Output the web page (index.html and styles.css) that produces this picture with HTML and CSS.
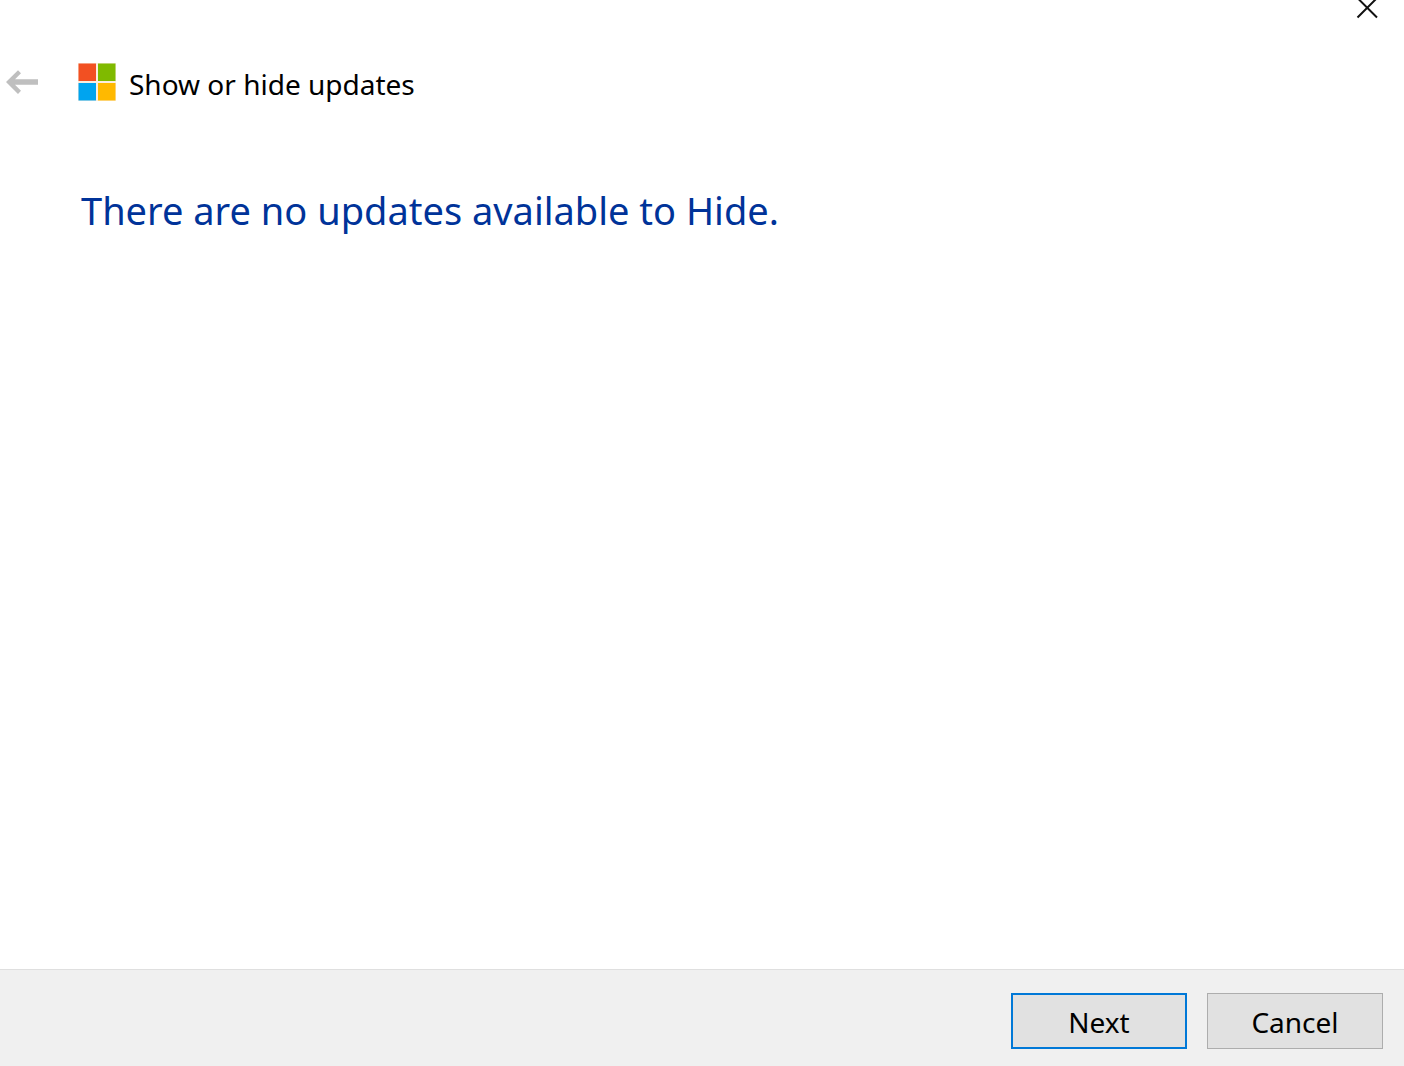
FILE: index.html
```html
<!DOCTYPE html>
<html lang="en">
<head>
<meta charset="utf-8">
<title>Show or hide updates</title>
<link rel="stylesheet" href="styles.css">
</head>
<body>
<div class="wizard">
  <div class="titlebar">
    <button class="icon-button" type="button" aria-label="Close">
      <svg class="close-icon" width="22" height="20" viewBox="0 0 22 20"><path d="M1.500 -2L21 17.500M21 -2L1.500 17.500" fill="none" stroke="#111" stroke-width="2"/></svg>
    </button>
  </div>
  <header class="header">
    <button class="icon-button" type="button" aria-label="Back" disabled>
      <svg class="back-icon" width="34" height="26" viewBox="0 0 34 26"><path d="M1 13L13 1.200L16 4.200L10 10.200H33V15.800H10L16 21.800L13 25Z" fill="#bfbfbf"/></svg>
    </button>
    <svg class="logo" width="38" height="38" viewBox="0 0 38 38"><path fill="#fbeee0" d="M0 0h38v38H0z"/><path fill="#f25022" d="M.5.5H18V18H.5z"/><path fill="#7fba00" d="M20 .5h17.500V18H20z"/><path fill="#00a4ef" d="M.5 20H18v17.500H.5z"/><path fill="#ffb900" d="M20 20h17.500v17.500H20z"/></svg>
    <h1 class="title">Show or hide updates</h1>
  </header>
  <main class="content">
    <h2 class="message">There are no updates available to Hide.</h2>
  </main>
  <footer class="footer">
    <button class="button button-default" type="button">Next</button>
    <button class="button" type="button">Cancel</button>
  </footer>
</div>
</body>
</html>
```
FILE: styles.css
```css
* { box-sizing: border-box; }
body {
  margin: 0;
  background: #fff;
  color: #000;
  font-family: "Segoe UI", "Noto Sans", sans-serif;
}
.wizard { min-height: 100vh; display: flex; flex-direction: column; }
.titlebar { display: flex; justify-content: flex-end; height: 40px; padding-right: 26px; }
.icon-button { display: flex; align-items: flex-start; padding: 0; border: 0; background: none; }
.header { display: flex; align-items: center; height: 84px; padding-left: 5px; }
.logo { margin: 0 13px 0 39px; }
.title { margin: 0; padding-top: 4px; font-size: 28px; line-height: 40px; font-weight: 400; }
.content { flex: 1; padding: 58px 81px; }
.message { margin: 0; color: #003399; font-size: 38px; line-height: 56px; font-weight: 400; }
.footer {
  display: flex;
  justify-content: flex-end;
  gap: 20px;
  padding: 23px 21px 17px;
  border-top: 1px solid #dfdfdf;
  background: #f0f0f0;
}
.button {
  width: 176px;
  height: 56px;
  padding: 2px 0 0;
  border: 1px solid #adadad;
  background: #e1e1e1;
  color: #000;
  font: inherit;
  font-size: 28px;
  line-height: 40px;
}
.button-default { border: 2px solid #0078d7; }
```
